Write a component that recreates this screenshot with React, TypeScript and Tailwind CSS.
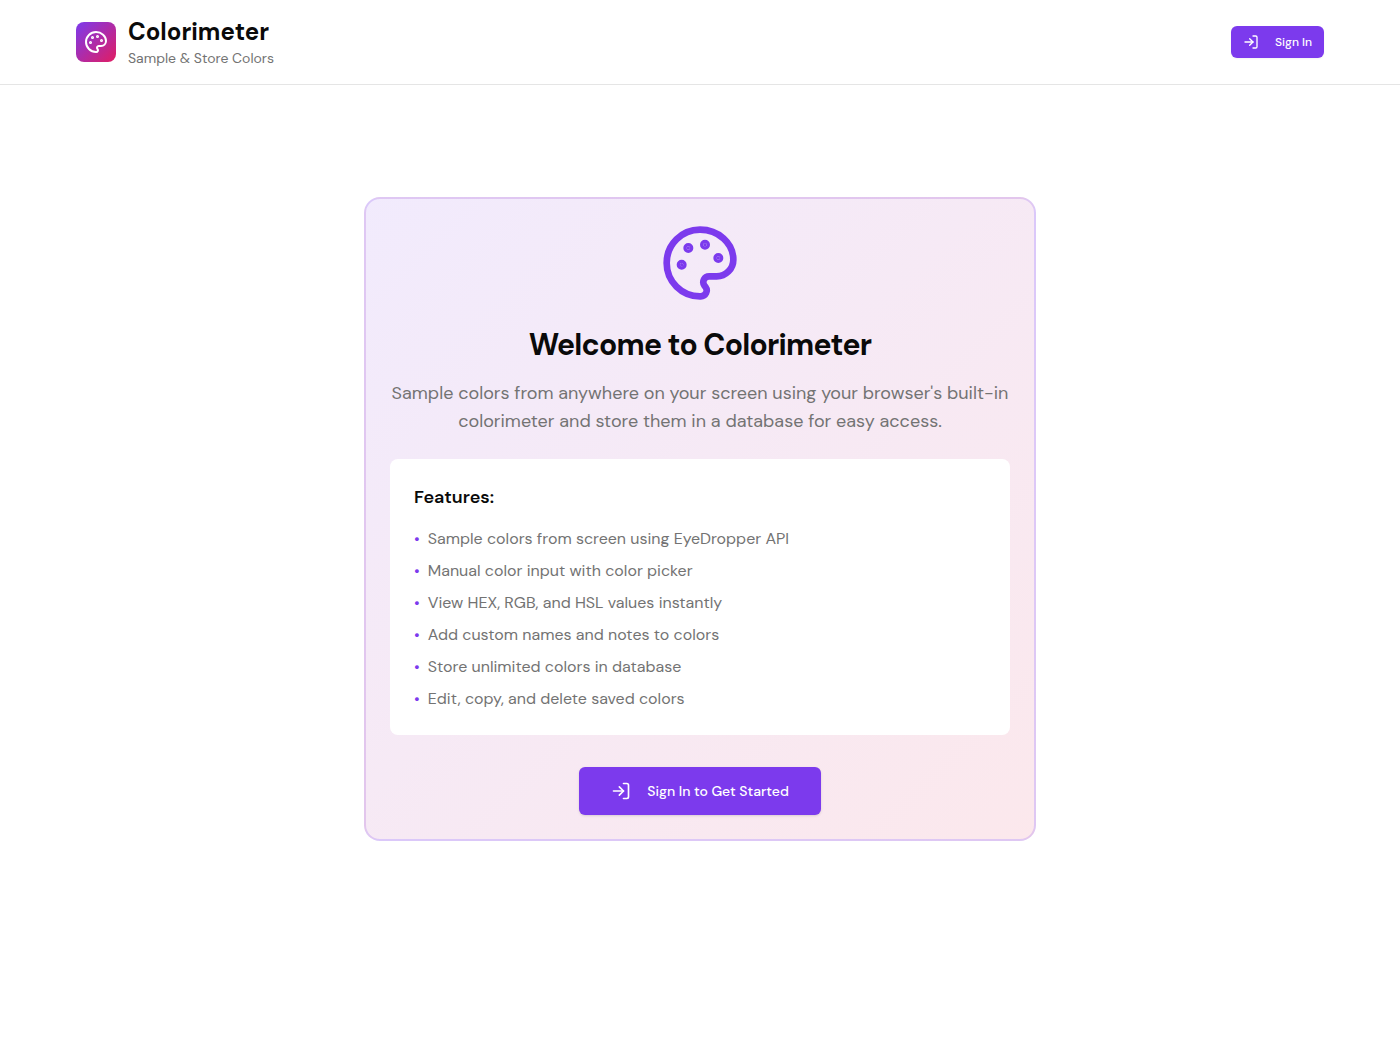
import React from 'react';
import { LogIn, Palette } from 'lucide-react';

const features = [
  'Sample colors from screen using EyeDropper API',
  'Manual color input with color picker',
  'View HEX, RGB, and HSL values instantly',
  'Add custom names and notes to colors',
  'Store unlimited colors in database',
  'Edit, copy, and delete saved colors',
];

const Header: React.FC = () => (
  <header className="border-b border-[#e5e5e5] bg-white">
    <div className="mx-auto flex max-w-7xl items-center justify-between px-4 py-4">
      <div className="flex items-center gap-3">
        <div className="flex size-10 items-center justify-center rounded-lg bg-linear-to-br/srgb from-[#7c3aed] to-[#e11d62]">
          <Palette className="size-6 text-white" />
        </div>
        <div>
          <h1 className="text-2xl font-bold">Colorimeter</h1>
          <p className="text-sm text-[#737373]">Sample &amp; Store Colors</p>
        </div>
      </div>
      <button
        type="button"
        className="flex h-8 items-center gap-4 rounded-md bg-[#7c3aed] px-3 text-xs font-medium text-white shadow-xs"
      >
        <LogIn className="size-4" />
        Sign In
      </button>
    </div>
  </header>
);

const WelcomeCard: React.FC = () => (
  <section className="w-full max-w-2xl rounded-2xl border-2 border-[#7c3aed]/20 bg-linear-to-br/srgb from-[#7c3aed]/10 to-[#e11d48]/10 p-6 text-center">
    <Palette className="mx-auto mb-6 size-20 text-[#7c3aed]" />
    <h2 className="mb-4 text-3xl font-bold tracking-tight">Welcome to Colorimeter</h2>
    <p className="mb-6 text-lg text-[#737373]">
      Sample colors from anywhere on your screen using your browser's built-in colorimeter and store them in a database for easy access.
    </p>

    <div className="mb-8 rounded-lg bg-white p-6 text-left">
      <h3 className="mb-4 text-lg font-semibold">Features:</h3>
      <ul className="space-y-2 text-[#737373]">
        {features.map((feature) => (
          <li key={feature} className="flex items-start gap-2">
            <span className="text-[#7c3aed]">•</span>
            <span>{feature}</span>
          </li>
        ))}
      </ul>
    </div>

    <button
      type="button"
      className="mx-auto flex h-12 items-center gap-4 rounded-md bg-[#7c3aed] px-8 text-sm font-medium text-white shadow-sm"
    >
      <LogIn className="size-5" />
      Sign In to Get Started
    </button>
  </section>
);

const App: React.FC = () => {
  return (
    <div className="min-h-screen bg-white font-['DM_Sans','Inter',sans-serif] text-[#0a0a0a]">
      <Header />
      <main className="mx-auto flex max-w-7xl justify-center px-4 py-28">
        <WelcomeCard />
      </main>
    </div>
  );
};

export default App;
